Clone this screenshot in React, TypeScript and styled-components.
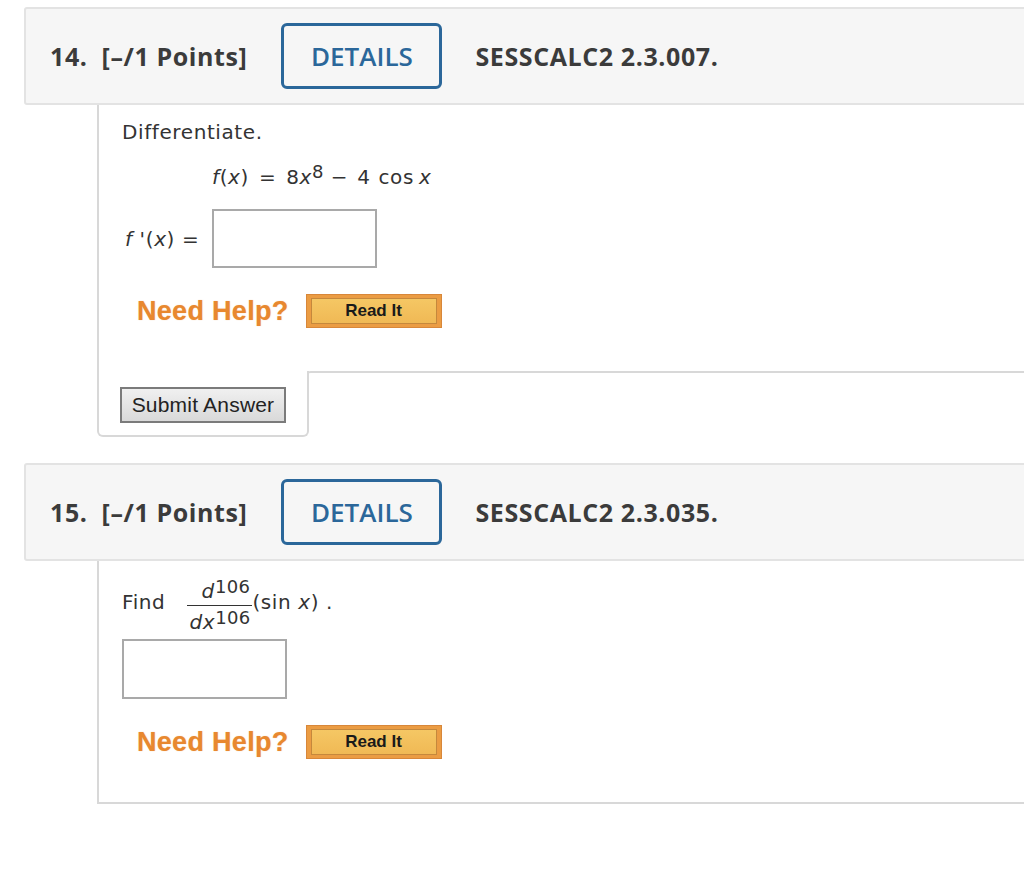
import React from "react";
import styled, { createGlobalStyle } from "styled-components";

const Global = createGlobalStyle`
  html, body { margin: 0; padding: 0; background: #fff; overflow: hidden; }
  body { font-family: "DejaVu Sans", Verdana, sans-serif; }
`;

const Page = styled.div`
  padding: 7px 0 0 24px;
  width: 1100px;
`;

const Question = styled.section<{ $gap?: number }>`
  display: flex;
  flex-direction: column;
  margin-bottom: ${(p) => p.$gap ?? 0}px;
`;

const Header = styled.header`
  box-sizing: border-box;
  height: 98px;
  display: flex;
  align-items: center;
  padding-left: 24px;
  background: #f6f6f6;
  border: 2px solid #e3e3e3;
  border-radius: 3px;
  font-family: "Open Sans", sans-serif;
  font-weight: 700;
  font-size: 25px;
  letter-spacing: 0.6px;
  color: #3b3b3b;
`;

const Num = styled.span`
  margin-right: 14px;
`;

const Points = styled.span`
  margin-right: 34px;
`;

const DetailsButton = styled.button`
  box-sizing: border-box;
  width: 161px;
  height: 66px;
  border: 3px solid #2b679a;
  border-radius: 6px;
  background: transparent;
  color: #2b679a;
  font-family: "Open Sans", sans-serif;
  font-weight: 600;
  font-size: 26px;
  margin-right: 33px;
  padding: 0;
`;

const Source = styled.span``;

const Body = styled.div`
  margin-left: 73px;
  display: flex;
  flex-direction: column;
`;

const Content = styled.div<{ $bottom?: boolean; $pt: number; $h: number }>`
  box-sizing: border-box;
  border-left: 2px solid #d8d8d8;
  ${(p) => (p.$bottom ? "border-bottom: 2px solid #d8d8d8;" : "")}
  padding: ${(p) => p.$pt}px 0 0 23px;
  height: ${(p) => p.$h}px;
  font-size: 20px;
  letter-spacing: 0.6px;
  color: #333;
`;

const Prompt = styled.div`
  line-height: 26px;
`;

const MathLine = styled.div<{ $indent?: number; $mt?: number }>`
  display: flex;
  align-items: center;
  margin-left: ${(p) => p.$indent ?? 0}px;
  margin-top: ${(p) => p.$mt ?? 0}px;
  font-family: "DejaVu Sans", sans-serif;
  font-size: 20px;
  color: #333;
  white-space: pre;
`;

const Gap = styled.span<{ $w: number }>`
  display: inline-block;
  width: ${(p) => p.$w}px;
`;

const I = styled.i`
  font-style: oblique;
`;

const Sup = styled.span`
  font-size: 18px;
  line-height: 1;
  position: relative;
  top: -0.28em;
  letter-spacing: 0.3px;
`;

const AnswerBox = styled.div<{ $w: number; $h: number }>`
  box-sizing: border-box;
  width: ${(p) => p.$w}px;
  height: ${(p) => p.$h}px;
  border: 2px solid #a9a9a9;
  background: #fff;
`;

const Label = styled.span`
  margin-left: 3px;
  margin-right: 13px;
`;

const HelpRow = styled.div<{ $mt: number }>`
  display: flex;
  align-items: center;
  margin-top: ${(p) => p.$mt}px;
  margin-left: 15px;
`;

const NeedHelp = styled.span`
  font-family: "Liberation Sans", Arial, sans-serif;
  font-weight: 700;
  font-size: 27px;
  letter-spacing: 0.3px;
  color: #e8882f;
  text-shadow: 0 0 1px rgba(232, 136, 47, 0.55);
  margin-right: 17px;
`;

const ReadIt = styled.button`
  box-sizing: border-box;
  width: 136px;
  height: 34px;
  padding: 3px 4px;
  background: #eb9c43;
  border: 1px solid #d8873a;
  display: flex;
`;

const ReadItInner = styled.span`
  flex: 1;
  display: flex;
  align-items: center;
  justify-content: center;
  border: 1px solid #c5883c;
  background: linear-gradient(#f5c764, #f0b955);
  font-family: "Liberation Sans", Arial, sans-serif;
  font-weight: 700;
  font-size: 17px;
  color: #1a1a1a;
`;

const Footer = styled.div`
  display: flex;
`;

const SubmitTab = styled.div`
  box-sizing: border-box;
  width: 212px;
  height: 66px;
  border: 2px solid #d8d8d8;
  border-top: none;
  border-radius: 0 0 6px 6px;
  padding: 16px 0 0 21px;
`;

const TabRest = styled.div`
  flex: 1;
  border-top: 2px solid #d8d8d8;
  margin-left: -2px;
  border-top-left-radius: 4px;
`;

const SubmitButton = styled.button`
  box-sizing: border-box;
  width: 166px;
  height: 36px;
  border: 2px solid #7b7b7b;
  background: linear-gradient(#f0f0f0, #d9d9d9);
  font-family: "Liberation Sans", Arial, sans-serif;
  font-size: 21px;
  letter-spacing: 0.2px;
  color: #222;
  padding: 0;
`;

const Fraction = styled.span`
  display: inline-flex;
  flex-direction: column;
  align-items: center;
  margin-left: 22px;
  font-size: 20px;
`;

const FracTop = styled.span`
  line-height: 28px;
  padding: 8px 0 0 12px;
`;

const FracBottom = styled.span`
  line-height: 26px;
  border-top: 1px solid #333;
  padding: 3px 2px 0;
`;

const Help = () => (
  <>
    <NeedHelp>Need Help?</NeedHelp>
    <ReadIt>
      <ReadItInner>Read It</ReadItInner>
    </ReadIt>
  </>
);

export default function App() {
  return (
    <Page>
      <Global />
      <Question $gap={26}>
        <Header>
          <Num>14.</Num>
          <Points>[–/1 Points]</Points>
          <DetailsButton>DETAILS</DetailsButton>
          <Source>SESSCALC2 2.3.007.</Source>
        </Header>
        <Body>
          <Content $pt={14} $h={266}>
            <Prompt>Differentiate.</Prompt>
            <MathLine $indent={90} $mt={20}>
              <I>f</I>(<I>x</I>)<Gap $w={10} />=<Gap $w={10} />8<I>x</I>
              <Sup>8</Sup>
              <Gap $w={7} />−<Gap $w={9} />4<Gap $w={8} />cos<Gap $w={5} />
              <I>x</I>
            </MathLine>
            <MathLine $mt={20}>
              <Label>
                <I>f</I> '(<I>x</I>) =
              </Label>
              <AnswerBox $w={165} $h={59} />
            </MathLine>
            <HelpRow $mt={26}>
              <Help />
            </HelpRow>
          </Content>
          <Footer>
            <SubmitTab>
              <SubmitButton>Submit Answer</SubmitButton>
            </SubmitTab>
            <TabRest />
          </Footer>
        </Body>
      </Question>
      <Question>
        <Header>
          <Num>15.</Num>
          <Points>[–/1 Points]</Points>
          <DetailsButton>DETAILS</DetailsButton>
          <Source>SESSCALC2 2.3.035.</Source>
        </Header>
        <Body>
          <Content $bottom $pt={8} $h={243}>
            <MathLine>
              Find
              <Fraction>
                <FracTop>
                  <I>d</I>
                  <Sup>106</Sup>
                </FracTop>
                <FracBottom>
                  <I>dx</I>
                  <Sup>106</Sup>
                </FracBottom>
              </Fraction>
              (sin <I>x</I>) .
            </MathLine>
            <MathLine $mt={4}>
              <AnswerBox $w={165} $h={60} />
            </MathLine>
            <HelpRow $mt={26}>
              <Help />
            </HelpRow>
          </Content>
        </Body>
      </Question>
    </Page>
  );
}
